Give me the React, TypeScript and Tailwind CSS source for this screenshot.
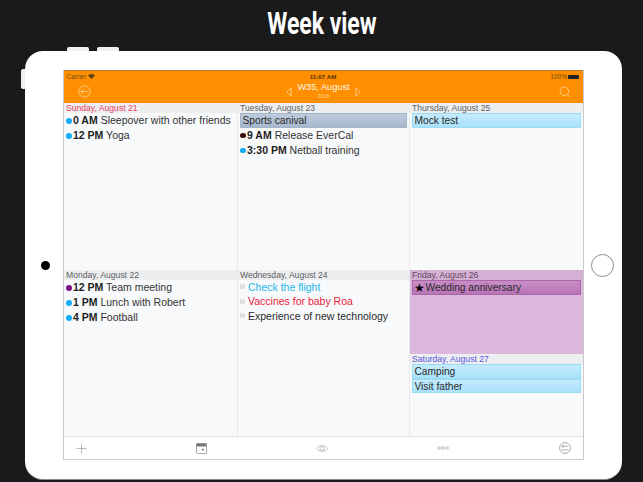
const font = "font-['Liberation_Sans',Arial,sans-serif]";

function Header({ label, color = "text-[#5c5f63]", bg = "bg-[#eceef0]" }: { label: string; color?: string; bg?: string }) {
  return (
    <div className={`h-[10.5px] shrink-0 pl-[2.5px] text-[8.6px] leading-[11px] ${color} ${bg}`}>{label}</div>
  );
}

function Timed({ dot, time, title }: { dot: string; time: string; title: string }) {
  return (
    <div className="flex h-[15px] items-center pl-[2.5px] text-[10.5px] leading-[15px] text-[#333]">
      <span className={`mr-[1.5px] h-[5.5px] w-[5.5px] shrink-0 rounded-full ${dot}`} />
      <span className="whitespace-nowrap">
        <b className="text-[#1d1d1d]">{time}</b> {title}
      </span>
    </div>
  );
}

function Banner({ label, tone }: { label: string; tone: "blue" | "slate" | "purple" }) {
  const cls = {
    blue: "border-[#9adcf3] bg-gradient-to-b from-[#c4ebfd] to-[#a9e2fb]",
    slate: "border-[#a3b5ca] bg-gradient-to-b from-[#bccadb] to-[#a9b9cd]",
    purple: "border-[#ab66a9] bg-gradient-to-b from-[#c98ec6] to-[#b974b6]",
  }[tone];
  return (
    <div className={`mx-[2px] h-[14.6px] border-[0.5px] pl-[2px] text-[10.2px] leading-[14px] text-[#2a2a2a] ${cls}`}>{label}</div>
  );
}

function Task({ label, color, box }: { label: string; color: string; box: string }) {
  return (
    <div className="flex h-[14.6px] items-center pl-[2.5px] text-[10.5px] leading-[14px]">
      <svg width="5" height="5" viewBox="0 0 6 6" className="mr-[3px] shrink-0">
        <rect x="0.5" y="0.5" width="5" height="5" fill="#f0f1f2" stroke="#cfd1d4" strokeWidth="0.7" />
        <path d={box} stroke="#a4a7ab" strokeWidth="0.8" fill="none" />
      </svg>
      <span className={`whitespace-nowrap ${color}`}>{label}</span>
    </div>
  );
}

const orangeIcon = "#ffd8a0";

export default function App() {
  return (
    <div className={`flex h-[482px] w-[643px] flex-col items-start overflow-hidden bg-[#1a1a1a] ${font}`}>
      <div className="flex h-[51px] w-full shrink-0 items-center justify-center pb-[3px]">
        <span className="origin-center scale-x-[0.74] whitespace-nowrap font-['Roboto',sans-serif] text-[31px] leading-[32px] font-bold text-white">
          Week view
        </span>
      </div>

      <div className="relative ml-[25px] flex h-[428.5px] w-[597px] shrink-0 items-center rounded-[18px] border-b-[1.5px] border-[#8a8a8a] bg-white pt-[19px] pb-[18px]">
        <span className="absolute top-[-4px] left-[42px] h-[4px] w-[22px] rounded-t-[2px] bg-[#f0f0f0]" />
        <span className="absolute top-[-4px] left-[72px] h-[4px] w-[22px] rounded-t-[2px] bg-[#f0f0f0]" />
        <span className="absolute top-[18px] left-[-4px] h-[20px] w-[4px] rounded-l-[2px] bg-[#f0f0f0]" />

        <div className="flex w-[37.5px] shrink-0 justify-center pl-[4px]">
          <span className="h-[9px] w-[9px] rounded-full bg-black" />
        </div>

        <div className="flex h-[390px] w-[521px] shrink-0 flex-col border-x border-b border-[#c9cacc]">
          {/* status + nav */}
          <div className="h-[32.5px] shrink-0 border-t border-[#a87b3f] bg-[#ff8f00] px-[3px] text-[#6e4a12]">
            <div className="flex h-[10px] items-center justify-between pt-[1px] text-[6.5px] leading-[8px]">
              <div className="flex w-[100px] items-center gap-[2px]">
                <span>Carrier</span>
                <svg width="7" height="5" viewBox="0 0 7 5">
                  <path d="M0 1.4C2 -.4 5 -.4 7 1.4L3.5 5z" fill="#5f3f0e" />
                </svg>
              </div>
              <span className="text-[6.2px] font-bold text-[#4f3308]">11:07 AM</span>
              <div className="flex w-[100px] items-center justify-end gap-[1.5px]">
                <span>100%</span>
                <span className="h-[4px] w-[11px] rounded-[1px] bg-[#222]" />
              </div>
            </div>
            <div className="flex h-[21px] items-center justify-between pr-[8.5px] pl-[11.5px]">
              <svg width="13" height="13" viewBox="0 0 13 13" fill="none" stroke={orangeIcon} strokeWidth="0.8">
                <circle cx="6.5" cy="6.5" r="5.6" />
                <path d="M10 6.5H3M5.5 4L3 6.5L5.5 9" />
              </svg>
              <div className="mr-[3px] flex items-center gap-[5px]">
                <svg width="6" height="10" viewBox="0 0 6 10" fill="none" stroke={orangeIcon} strokeWidth="0.8">
                  <path d="M5.2 .8V9.2L.8 5z" />
                </svg>
                <div className="flex flex-col items-center pb-[1px]">
                  <span className="text-[9.2px] leading-[10px] text-[#fff6e8]">W35, August</span>
                  <span className="text-[5.5px] leading-[8px] text-[#ffd08a]">2016</span>
                </div>
                <svg width="6" height="10" viewBox="0 0 6 10" fill="none" stroke={orangeIcon} strokeWidth="0.8">
                  <path d="M.8 .8V9.2L5.2 5z" />
                </svg>
              </div>
              <svg width="12" height="12" viewBox="0 0 12 12" fill="none" stroke={orangeIcon} strokeWidth="0.8">
                <circle cx="5.4" cy="5.4" r="4.3" />
                <path d="M8.5 8.5L11 11" />
              </svg>
            </div>
          </div>

          {/* week grid */}
          <div className="grid min-h-0 flex-1 grid-cols-[174px_172px_173px] grid-rows-[167px_167px] bg-[#f8f9fb]">
            <div className="border-r border-[#e8eaed]">
              <Header label="Sunday, August 21" color="text-[#e8405f]" />
              <Timed dot="bg-[#12aef5]" time="0 AM" title="Sleepover with other friends" />
              <Timed dot="bg-[#12aef5]" time="12 PM" title="Yoga" />
            </div>
            <div className="border-r border-[#e8eaed]">
              <Header label="Tuesday, August 23" />
              <Banner label="Sports canival" tone="slate" />
              <Timed dot="bg-[#3d0a0a]" time="9 AM" title="Release EverCal" />
              <Timed dot="bg-[#12aef5]" time="3:30 PM" title="Netball training" />
            </div>
            <div>
              <Header label="Thursday, August 25" />
              <Banner label="Mock test" tone="blue" />
            </div>

            <div className="border-r border-[#e8eaed]">
              <Header label="Monday, August 22" />
              <Timed dot="bg-[#7c0f80]" time="12 PM" title="Team meeting" />
              <Timed dot="bg-[#12aef5]" time="1 PM" title="Lunch with Robert" />
              <Timed dot="bg-[#12aef5]" time="4 PM" title="Football" />
            </div>
            <div className="border-r border-[#e8eaed]">
              <Header label="Wednesday, August 24" />
              <div className="-mt-[1px]">
                <Task label="Check the flight" color="text-[#22b5ea]" box="M1.5 3L2.7 4.2L4.5 1.8" />
                <Task label="Vaccines for baby Roa" color="text-[#ea1c3c]" box="M1.5 3L2.7 4.2L4.5 1.8" />
                <Task label="Experience of new technology" color="text-[#2b2b2b]" box="M1.5 3H4.5" />
              </div>
            </div>
            <div className="flex flex-col">
              <div className="h-[84px] shrink-0 bg-[#dcb9dc]">
                <Header label="Friday, August 26" color="text-[#5e4a5e]" bg="bg-[#d6b0d4]" />
                <div className="mx-[2px] flex h-[14.6px] items-center gap-[0.5px] border-[0.5px] border-[#ab66a9] bg-gradient-to-b from-[#c98ec6] to-[#b974b6] pl-[1.5px] text-[10.2px] text-[#2a2a2a]">
                  <span className="text-[11.5px] leading-[12px] text-black">★</span>
                  <span>Wedding anniversary</span>
                </div>
              </div>
              <Header label="Saturday, August 27" color="text-[#5a56e0]" />
              <Banner label="Camping" tone="blue" />
              <Banner label="Visit father" tone="blue" />
            </div>
          </div>

          {/* toolbar */}
          <div className="flex h-[23px] shrink-0 items-center justify-between border-t border-[#e2e3e5] bg-white pr-[12px] pl-[12.5px]">
            <svg width="11" height="11" viewBox="0 0 11 11" stroke="#a5a7aa" strokeWidth="0.8">
              <path d="M5.5 .5V10.5M.5 5.5H10.5" />
            </svg>
            <svg width="11" height="11" viewBox="0 0 11 11">
              <rect x="0.5" y="0.5" width="10" height="10" rx="1" fill="#fff" stroke="#8f9194" strokeWidth="0.8" />
              <rect x="0.5" y="0.5" width="10" height="3" fill="#77797c" />
              <rect x="6" y="5.8" width="1.8" height="1.8" fill="#77797c" />
            </svg>
            <svg width="12" height="9" viewBox="0 0 12 9" fill="none" stroke="#a5a7aa" strokeWidth="0.7">
              <path d="M.5 4.5C3 .8 9 .8 11.5 4.5C9 8.2 3 8.2 .5 4.5z" />
              <circle cx="6" cy="4.5" r="2" />
            </svg>
            <svg width="12" height="4" viewBox="0 0 12 4" fill="none" stroke="#a5a7aa" strokeWidth="0.7">
              <circle cx="2" cy="2" r="1.4" />
              <circle cx="6" cy="2" r="1.4" />
              <circle cx="10" cy="2" r="1.4" />
            </svg>
            <svg width="12" height="12" viewBox="0 0 12 12" fill="none" stroke="#85878a" strokeWidth="0.7">
              <circle cx="6" cy="6" r="5.4" />
              <path d="M3 4.2H8.8M4.6 2.6L3 4.2L4.6 5.8M2.6 7.8H9.4" />
            </svg>
          </div>
        </div>

        <div className="flex flex-1 justify-center pr-[1px]">
          <span className="h-[23px] w-[23px] rounded-full border-[1.5px] border-[#8d8d8d]" />
        </div>
      </div>
    </div>
  );
}
